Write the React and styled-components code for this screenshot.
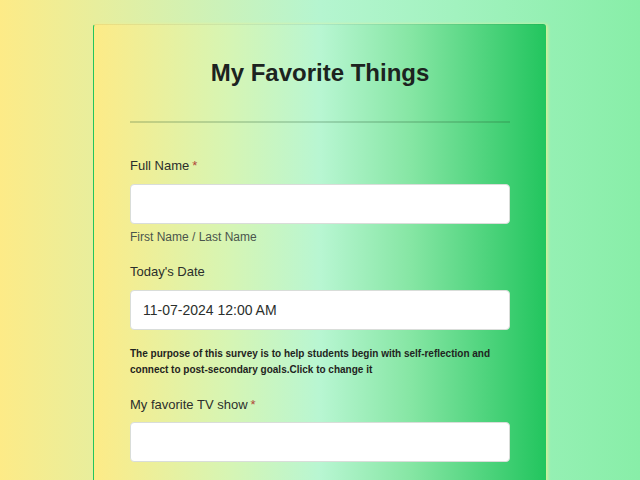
import React from "react";
import styled, { createGlobalStyle } from "styled-components";

const Global = createGlobalStyle`
  html, body { margin: 0; padding: 0; }
  body {
    font-family: "Liberation Sans", Arial, sans-serif;
    background: linear-gradient(to right, #fdeb87 0%, #b5f5d0 50%, #88eea8 100%);
    min-height: 480px;
    overflow: hidden;
  }
`;

const Page = styled.div`
  display: flex;
  justify-content: center;
  padding-top: 24px;
  min-height: 456px;
`;

const Card = styled.div`
  width: 453px;
  box-sizing: border-box;
  padding: 33px 36px 40px 36px;
  background: linear-gradient(to right, #fdeb87 0%, #d6f5b4 30%, #b8f6d2 50%, #86e6a4 70%, #22c55e 100%);
  border-left: 1px solid #22c55e;
  border-top: 1px solid rgba(0, 0, 0, 0.06);
  border-radius: 3px 3px 0 0;
  box-shadow: 2px 0 3px rgba(250, 240, 140, 0.6);
  min-height: 456px;
  margin-left: -1px;
`;

const Title = styled.h1`
  margin: 0;
  text-align: center;
  font-size: 24px;
  line-height: 29px;
  font-weight: 700;
  color: #1c2320;
`;

const Divider = styled.hr`
  margin: 34px 0 0 0;
  border: none;
  height: 2px;
  background: rgba(40, 90, 50, 0.22);
`;

const Field = styled.div`
  display: flex;
  flex-direction: column;
  margin-top: ${(p) => p.$top}px;
`;

const Label = styled.label`
  font-size: 13px;
  line-height: 16px;
  padding-top: 1px;
  color: #2b2f2c;
  margin-bottom: ${(p) => p.$gap ?? 10}px;
`;

const Required = styled.span`
  color: #b0473a;
  margin-left: 3px;
`;

const Input = styled.input`
  box-sizing: border-box;
  height: 40px;
  width: 100%;
  border: 1px solid #d9ddd9;
  border-radius: 4px;
  background: #fff;
  padding: 0 12px;
  font-family: "Liberation Sans", Arial, sans-serif;
  font-size: 14px;
  color: #2b2f2c;
  outline: none;
`;

const Help = styled.div`
  margin-top: 5px;
  padding-top: 1px;
  font-size: 12px;
  line-height: 14px;
  color: #4a554c;
`;

const Note = styled.p`
  margin: 15px 0 0 0;
  padding-top: 1px;
  font-size: 10px;
  line-height: 16px;
  font-weight: 700;
  color: #1f2421;
`;

export default function App() {
  return (
    <>
      <Global />
      <Page>
        <Card>
          <Title>My Favorite Things</Title>
          <Divider />
          <Field $top={34}>
            <Label>
              Full Name<Required>*</Required>
            </Label>
            <Input type="text" />
            <Help>First Name / Last Name</Help>
          </Field>
          <Field $top={19}>
            <Label>Today's Date</Label>
            <Input type="text" defaultValue="11-07-2024 12:00 AM" />
          </Field>
          <Note>
            The purpose of this survey is to help students begin with self-reflection and
            connect to post-secondary goals.Click to change it
          </Note>
          <Field $top={18}>
            <Label $gap={9}>
              My favorite TV show<Required>*</Required>
            </Label>
            <Input type="text" />
          </Field>
        </Card>
      </Page>
    </>
  );
}
